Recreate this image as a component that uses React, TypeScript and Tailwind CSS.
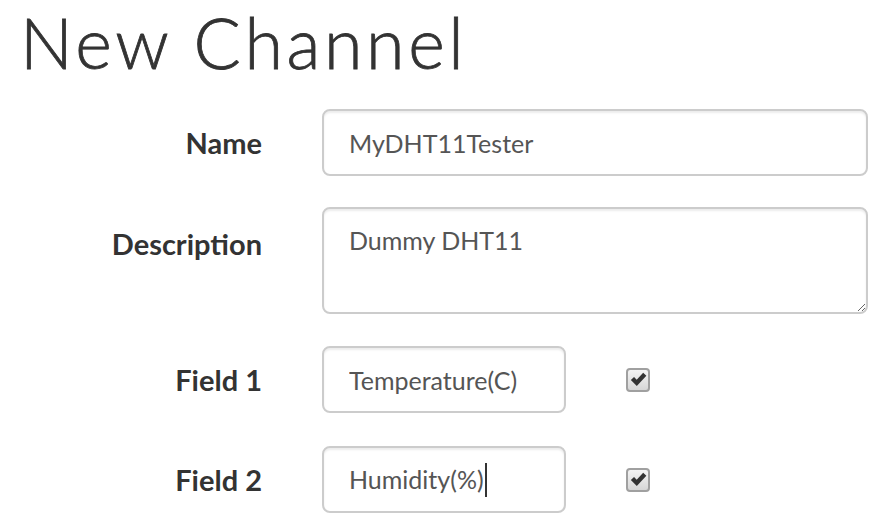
import React from "react"

const inputBase =
  "h-[67px] rounded-[8px] border-2 border-[#cccccc] bg-white px-[25px] py-[12px] text-[25px] leading-[39px] text-[#555555] shadow-[inset_0_2px_2px_rgba(0,0,0,0.075)] outline-none"

function Check() {
  return (
    <div className="flex h-[24px] w-[24px] items-center justify-center rounded-[4px] border-2 border-[#a0a0a0] bg-gradient-to-b from-[#f4f4f4] to-[#d6d6d6]">
      <svg viewBox="0 0 16 16" className="h-[17px] w-[17px]">
        <path d="M0.8 8.4 L3.8 5.6 L6.3 8.3 L12.4 1.6 L15.4 4.4 L6.4 14.2 Z" fill="#333333" />
      </svg>
    </div>
  )
}

function Label({ children, className = "" }: { children: React.ReactNode; className?: string }) {
  return (
    <label className={`w-[262px] shrink-0 text-right text-[29px] font-bold text-[#333333] ${className}`}>
      {children}
    </label>
  )
}

export default function App() {
  return (
    <div className="h-[528px] w-[894px] overflow-hidden bg-white" style={{ fontFamily: "Lato, 'Noto Sans', sans-serif" }}>
      <h1 className="pl-[20px] pt-[6px] text-[70px] font-light leading-[72px] tracking-[3.6px] text-[#333333] [-webkit-text-stroke:0.8px_#333333]">
        New Channel
      </h1>

      <form className="mt-[31px] flex flex-col">
        <div className="flex items-center gap-[60px]">
          <Label>Name</Label>
          <input className={`${inputBase} w-[546px]`} defaultValue="MyDHT11Tester" />
        </div>

        <div className="mt-[31px] flex items-start gap-[60px]">
          <Label className="pt-[15px]">Description</Label>
          <textarea className={`${inputBase} h-[107px] w-[546px] resize-y`} defaultValue="Dummy DHT11" />
        </div>

        <div className="mt-[32px] flex items-center gap-[60px]">
          <Label>Field 1</Label>
          <input className={`${inputBase} w-[244px]`} defaultValue="Temperature(C)" />
          <Check />
        </div>

        <div className="mt-[33px] flex items-center gap-[60px]">
          <Label>Field 2</Label>
          <div className={`${inputBase} flex w-[244px] items-center border-[#66afe9] shadow-[inset_0_2px_2px_rgba(0,0,0,0.075),0_0_14px_rgba(102,175,233,0.6)]`}>
            <span>Humidity(%)</span>
            <span className="ml-[1px] inline-block h-[34px] w-[2px] bg-[#333333]" />
          </div>
          <Check />
        </div>
      </form>
    </div>
  )
}
